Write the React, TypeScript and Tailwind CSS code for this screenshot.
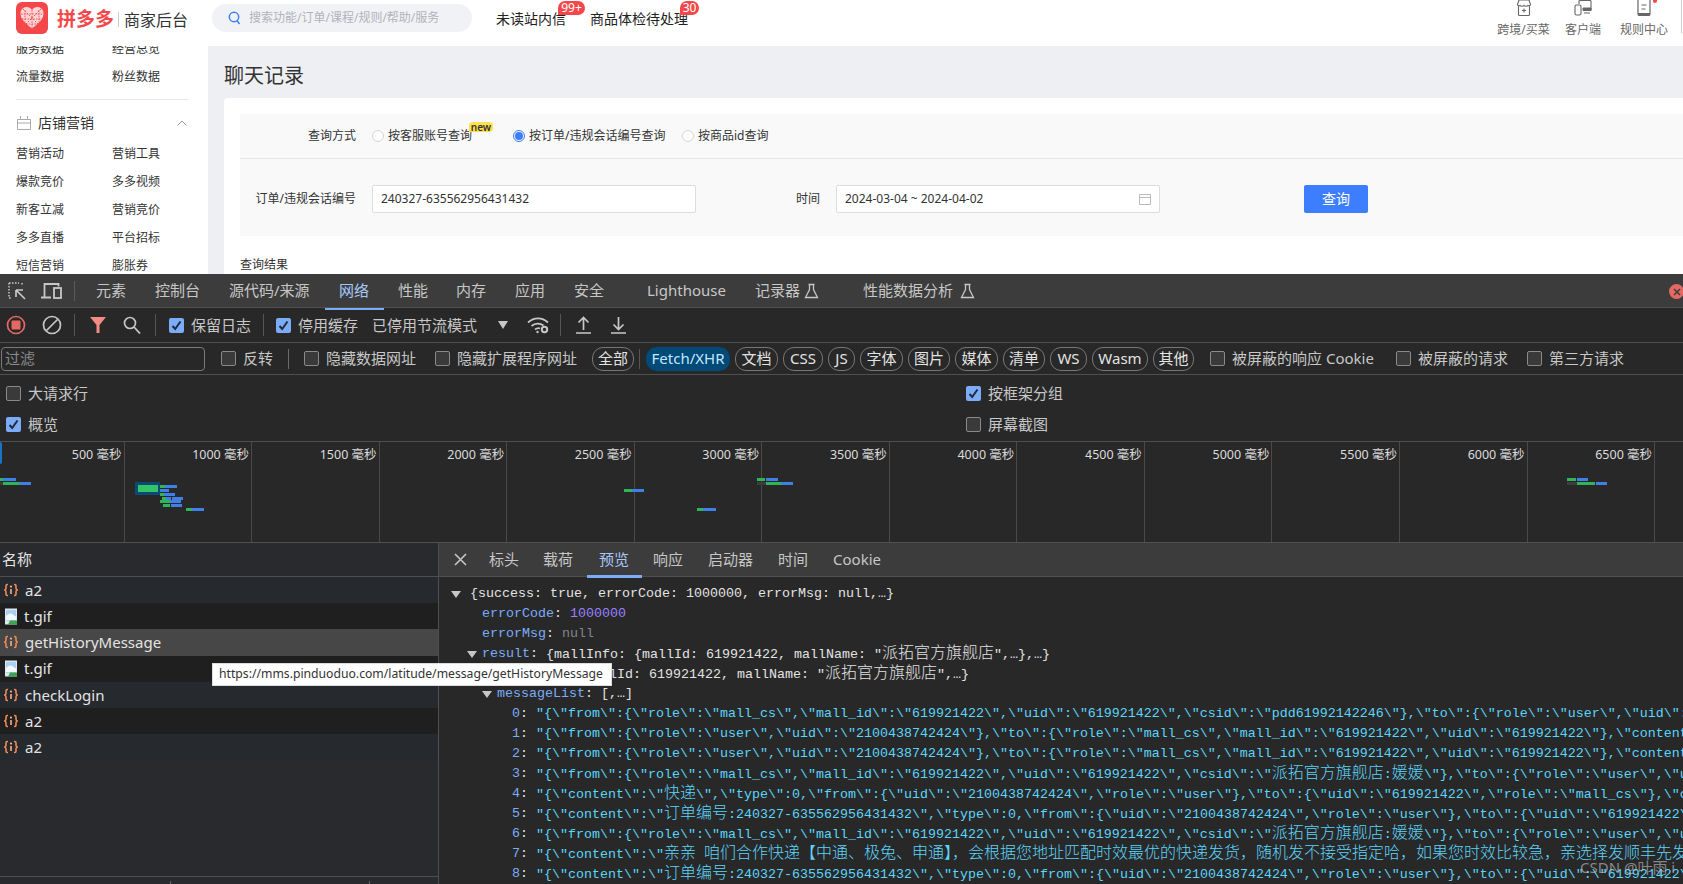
import React from "react";

const UI = '"Noto Sans","Noto Sans CJK SC",sans-serif';

function Mono({ text }: { text: string }) {
  const parts = text.split(/([\u3000-\u9fff\uff00-\uffef]+)/);
  return (
    <>
      {parts.map((p, i) =>
        /[\u3000-\u9fff\uff00-\uffef]/.test(p) ? (
          <span key={i} className="text-[16px] leading-[16px] font-['Noto_Sans_CJK_SC'] font-light">{p}</span>
        ) : (
          <span key={i}>{p}</span>
        )
      )}
    </>
  );
}

function Box({ checked }: { checked?: boolean }) {
  return checked ? (
    <span className="w-[15px] h-[15px] rounded-[2px] bg-[#7cacf8] flex items-center justify-center shrink-0">
      <svg width="11" height="11" viewBox="0 0 11 11"><path d="M1.5 6 L4.2 9 L9.5 1.5" fill="none" stroke="#1f2a3d" strokeWidth="2" /></svg>
    </span>
  ) : (
    <span className="w-[15px] h-[15px] rounded-[2px] bg-[#3a3a3a] border border-[#8a8a8a] shrink-0" />
  );
}

function Check({ label, checked, className }: { label: string; checked?: boolean; className: string }) {
  return (
    <div className={"flex items-center gap-[7px] shrink-0 whitespace-nowrap text-[15px] text-[#c7c7c7] " + className}>
      <Box checked={checked} />
      <span>{label}</span>
    </div>
  );
}

function Pill({ label, className, active }: { label: string; className: string; active?: boolean }) {
  return (
    <div
      className={
        "h-[24px] rounded-[11px] flex items-center justify-center shrink-0 text-[15px] " +
        (active ? "bg-[#004a77] text-[#c2e7ff] " : "border border-[#767676] text-[#e3e3e3] ") +
        className
      }
    >
      {label}
    </div>
  );
}

function Flask() {
  return (
    <svg width="15" height="16" viewBox="0 0 15 16" className="ml-[4px]">
      <path d="M4.5 1.5h6M5.5 1.5v5L1.5 14.5h12L9.5 6.5v-5" fill="none" stroke="#c7c7c7" strokeWidth="1.3" />
    </svg>
  );
}

function VLine({ className }: { className: string }) {
  return <span className={"w-px h-[22px] bg-[#555] shrink-0 " + className} />;
}

function JsonIcon() {
  return (
    <svg width="16" height="16" viewBox="0 0 16 16" className="shrink-0">
      <g fill="none" stroke="#ee8a55" strokeWidth="1.6">
        <path d="M5 2.5H4.2C3.2 2.5 3 3.2 3 4v2.2C3 7.2 2.5 7.8 1.2 8c1.3.2 1.8.8 1.8 1.8V12c0 .8.2 1.500 1.200 1.500H5" />
        <path d="M11 2.5h.8c1 0 1.2.7 1.2 1.500v2.200c0 1 .5 1.600 1.800 1.800-1.300.2-1.800.8-1.800 1.800V12c0 .8-.2 1.500-1.200 1.500H11" />
        <path d="M8 7v5" stroke="#f5b08a" />
      </g>
      <circle cx="8" cy="4.6" r="1.100" fill="#f5b08a" />
    </svg>
  );
}

function GifIcon() {
  return (
    <svg width="14" height="17" viewBox="0 0 14 17" className="shrink-0 ml-[1px]">
      <rect x="1" y="0.5" width="12" height="16" fill="#dfe8ee" />
      <rect x="2" y="2" width="10" height="11" fill="#a9d2f0" />
      <path d="M2 8c2-2 4-3 6-2l4 2.500V12H2z" fill="#f4f8fb" />
      <path d="M4 16.500l2-4h7v4z" fill="#3fa34d" />
    </svg>
  );
}

const sideRows1 = [["服务数据", "经营总览"], ["流量数据", "粉丝数据"]];
const sideRows2 = [["营销活动", "营销工具"], ["爆款竞价", "多多视频"], ["新客立减", "营销竞价"], ["多多直播", "平台招标"], ["短信营销", "膨胀券"]];

function SideRow({ a, b }: { a: string; b: string }) {
  return (
    <div className="h-[28px] flex items-center pl-[16px] text-[12px] text-[#333]">
      <span className="w-[96px]">{a}</span>
      <span>{b}</span>
    </div>
  );
}

function Radio({ on, className }: { on?: boolean; className: string }) {
  return on ? (
    <span className={"w-[12px] h-[12px] rounded-full border border-[#3d7eff] flex items-center justify-center shrink-0 " + className}>
      <span className="w-[8px] h-[8px] rounded-full bg-[#3d7eff]" />
    </span>
  ) : (
    <span className={"block w-[12px] h-[12px] rounded-full border border-[#d5d5d5] bg-white shrink-0 " + className} />
  );
}

const pools = ["500", "1000", "1500", "2000", "2500", "3000", "3500", "4000", "4500", "5000", "5500", "6000", "6500"];

const G = "#2fb45a";
const B = "#3f7fe8";
const D = "#3c3c3c";
const bars: [number, number, number, number, string][] = [
  [0, 478, 3, 3, G], [3, 478, 13, 3, B],
  [0, 482, 3, 3, D], [3, 482, 16, 3, G], [19, 482, 12, 3, B],
  [135, 482, 25, 13, "#0b4a73"], [138, 485, 20, 7, "#33c46a"],
  [160, 485, 5, 3, G], [165, 485, 12, 3, B],
  [160, 489, 9, 3, B],
  [160, 493, 4, 3, G], [164, 493, 11, 3, B],
  [162, 497, 4, 3, G], [166, 497, 5, 3, B], [172, 497, 11, 3, B],
  [160, 500, 10, 3, G], [170, 500, 11, 3, B],
  [163, 504, 7, 3, G], [171, 504, 11, 3, B],
  [186, 508, 6, 3, G], [192, 508, 12, 3, B],
  [624, 489, 8, 3, G], [632, 489, 12, 3, B],
  [697, 508, 6, 3, G], [703, 508, 13, 3, B],
  [757, 478, 8, 3, G], [766, 478, 12, 3, B],
  [757, 482, 9, 3, D], [766, 482, 15, 3, G], [781, 482, 12, 3, B],
  [1567, 478, 9, 3, G], [1577, 478, 11, 3, B],
  [1567, 482, 10, 3, D], [1577, 482, 18, 3, G], [1596, 482, 11, 3, B],
];

const rows: { name: string; gif?: boolean }[] = [
  { name: "a2" }, { name: "t.gif", gif: true }, { name: "getHistoryMessage" }, { name: "t.gif", gif: true },
  { name: "checkLogin" }, { name: "a2" }, { name: "a2" },
];

const msgA = String.raw`"{\"from\":{\"role\":\"mall_cs\",\"mall_id\":\"619921422\",\"uid\":\"619921422\",\"csid\":\"pdd61992142246\"},\"to\":{\"role\":\"user\",\"uid\":\"2100438742424\"}`;
const msgB = String.raw`"{\"from\":{\"role\":\"user\",\"uid\":\"2100438742424\"},\"to\":{\"role\":\"mall_cs\",\"mall_id\":\"619921422\",\"uid\":\"619921422\"},\"content\":\"`;
const msgC = String.raw`"{\"from\":{\"role\":\"mall_cs\",\"mall_id\":\"619921422\",\"uid\":\"619921422\",\"csid\":\"派拓官方旗舰店:媛媛\"},\"to\":{\"role\":\"user\",\"uid\":\"2100`;
const msgD = String.raw`"{\"content\":\"快递\",\"type\":0,\"from\":{\"uid\":\"2100438742424\",\"role\":\"user\"},\"to\":{\"uid\":\"619921422\",\"role\":\"mall_cs\"},\"content`;
const msgE = String.raw`"{\"content\":\"订单编号:240327-635562956431432\",\"type\":0,\"from\":{\"uid\":\"2100438742424\",\"role\":\"user\"},\"to\":{\"uid\":\"619921422\",\"role`;
const msgF = String.raw`"{\"content\":\"亲亲 咱们合作快递【中通、极兔、申通】，会根据您地址匹配时效最优的快递发货，随机发不接受指定哈，如果您时效比较急，亲选择发顺丰先发`;
const messages = [msgA, msgB, msgB, msgC, msgD, msgE, msgC, msgF, msgE];

function Arrow({ className }: { className: string }) {
  return (
    <svg width="10" height="7" viewBox="0 0 10 7" className={"shrink-0 " + className}>
      <path d="M0 0h10L5 7z" fill="#c7c7c7" />
    </svg>
  );
}

export default function App() {
  return (
    <div className="w-[1683px] h-[884px] overflow-hidden relative flex flex-col bg-[#282828]" style={{ fontFamily: UI }}>
      {/* page */}
      <div className="h-[274px] shrink-0 overflow-hidden flex flex-col bg-[#eeeff3]">
        <header className="h-[46px] shrink-0 bg-white flex items-start relative z-10">
          <svg width="32" height="32" viewBox="0 0 32 32" className="ml-[16px] mt-[2px] shrink-0">
            <rect width="32" height="32" rx="6" fill="#f4474a" />
            <path d="M16 26.5C9 21 4.5 17 4.5 11.5 4.5 7.5 7.5 5 10.5 5c2.3 0 4.3 1.2 5.5 3 1.2-1.8 3.2-3 5.5-3 3 0 6 2.5 6 6.5C27.5 17 23 21 16 26.5z" fill="#fbd5d6" />
            <path d="M16 8v18M9 8v12M23 8v12M5 12h22M6 17h20M10 22h12M7 7l18 18M25 7L7 25" stroke="#f4474a" strokeWidth="0.9" strokeDasharray="1.6 1.2" fill="none" />
          </svg>
          <span className="ml-[9px] mt-[5px] text-[19px] leading-[28px] font-bold tracking-[0px] text-[#f4474a] w-[56px] shrink-0 whitespace-nowrap">拼多多</span>
          <span className="ml-[5px] mt-[12px] w-px h-[15px] bg-[#ccc] shrink-0" />
          <span className="ml-[5px] mt-[8px] text-[16px] leading-[24px] text-[#333] w-[88px] shrink-0 whitespace-nowrap">商家后台</span>
          <div className="mt-[4px] ml-[0px] w-[260px] h-[28px] rounded-[14px] bg-[#f1f2f6] flex items-center pl-[16px] shrink-0">
            <svg width="13" height="14" viewBox="0 0 13 14"><circle cx="6" cy="6" r="4.7" fill="none" stroke="#3d7eff" strokeWidth="1.5" /><path d="M9 9.5L11.5 13" stroke="#3d7eff" strokeWidth="1.5" /></svg>
            <span className="ml-[8px] text-[12px] text-[#b0b3bb] whitespace-nowrap">搜索功能/订单/课程/规则/帮助/服务</span>
          </div>
          <div className="ml-[24px] mt-[9px] text-[14px] leading-[20px] text-[#222] relative w-[94px] shrink-0 whitespace-nowrap">
            未读站内信
            <span className="absolute left-[62px] -top-[8px] h-[14px] w-[27px] rounded-[7px_7px_7px_0] bg-[#f4474a] text-white text-[12px] leading-[14px] text-center">99+</span>
          </div>
          <div className="mt-[9px] text-[14px] leading-[20px] text-[#222] relative w-[100px] shrink-0 whitespace-nowrap">
            商品体检待处理
            <span className="absolute left-[90px] -top-[8px] h-[14px] w-[19px] rounded-[7px_7px_7px_0] bg-[#f4474a] text-white text-[12px] leading-[14px] text-center">30</span>
          </div>
          <div className="flex-1" />
          <div className="w-[53px] h-[38px] flex flex-col items-center text-[12px] text-[#666] shrink-0 whitespace-nowrap">
            <svg width="16" height="16" viewBox="0 0 16 16" className="shrink-0"><path d="M3 0h10l1.500 4.500c0 1.500-2 1.500-2.500 1-.5 1-3.500 1-4 0-.5 1-3.500 1-4 0-.5.5-2.500.5-2.500-1zM2.500 6v8.500c0 .5.5 1 1 1h9c.5 0 1-.5 1-1V6M6 10.500h4M8 8.500v4" fill="none" stroke="#666" strokeWidth="1.100" /></svg>
            <span className="leading-[16px] mt-[6px]">跨境/买菜</span>
          </div>
          <div className="ml-[15px] w-[36px] h-[38px] flex flex-col items-center text-[12px] text-[#666] shrink-0 whitespace-nowrap">
            <svg width="18" height="16" viewBox="0 0 18 16" className="shrink-0"><path d="M5 4V1.500C5 .8 5.500.5 6 .5h10c.6 0 1 .4 1 1v8c0 .6-.4 1-1 1H9" fill="none" stroke="#666" strokeWidth="1.100" /><rect x="1" y="5" width="6" height="10" rx="1.500" fill="none" stroke="#666" strokeWidth="1.100" /><path d="M9 8h8v2.500H9zM10 13h6" fill="#666" stroke="#666" strokeWidth="1" /></svg>
            <span className="leading-[16px] mt-[6px]">客户端</span>
          </div>
          <div className="ml-[19px] w-[48px] h-[38px] flex flex-col items-center text-[12px] text-[#666] shrink-0 whitespace-nowrap relative">
            <svg width="14" height="16" viewBox="0 0 14 16" className="shrink-0"><path d="M1 0v14c0 .8.5 1.300 1.200 1.300h9.600c.7 0 1.200-.5 1.200-1.300V0" fill="none" stroke="#666" strokeWidth="1.200" /><path d="M4.500 5h5M4.500 9h4" stroke="#666" strokeWidth="1" /><path d="M1 13h12v2.300H1z" fill="#666" /></svg>
            <span className="absolute left-[33px] top-0 w-[4px] h-[3px] rounded-b-full bg-[#f4474a]" />
            <span className="leading-[16px] mt-[6px]">规则中心</span>
          </div>
          <span className="ml-[13px] mr-[1px] w-px h-[33px] bg-[#ccc] shrink-0" />
        </header>
        <div className="flex flex-1 min-h-0">
          <aside className="w-[208px] shrink-0 bg-white overflow-hidden">
            <div className="-mt-[11px]">
              {sideRows1.map((r) => <SideRow key={r[0]} a={r[0]} b={r[1]} />)}
              <div className="mt-[8px] mx-[16px] w-[172px] h-px bg-[#e8e8e8]" />
              <div className="h-[45px] flex items-center pl-[17px] text-[14px] text-[#333]">
                <svg width="14" height="15" viewBox="0 0 14 15"><path d="M.5 4.500h13v10H.5zM.5 8h13M3.500 4.500V1M10.500 4.500V1" fill="none" stroke="#aaa" strokeWidth="1" /></svg>
                <span className="ml-[7px] w-[139px] whitespace-nowrap">店铺营销</span>
                <svg width="10" height="6" viewBox="0 0 10 6"><path d="M.5 5.500L5 1l4.500 4.500" fill="none" stroke="#999" strokeWidth="1" /></svg>
              </div>
              <div className="-mt-[5px]">
                {sideRows2.map((r) => <SideRow key={r[0]} a={r[0]} b={r[1]} />)}
              </div>
            </div>
          </aside>
          <main className="flex-1 min-w-0 pl-[16px] flex flex-col">
            <div className="h-[52px] shrink-0 flex items-center pt-[8px] text-[20px] text-[#333] whitespace-nowrap">聊天记录</div>
            <div className="flex-1 bg-white rounded-tl-[4px] pl-[16px] pt-[16px] overflow-hidden">
              <div className="bg-[#f9f9fa] text-[12px] text-[#333]">
                <div className="h-[45px] border-b border-[#e7e7e7] flex items-center whitespace-nowrap">
                  <span className="w-[116px] text-right shrink-0">查询方式</span>
                  <Radio className="ml-[16px]" />
                  <span className="ml-[4px] w-[83px] shrink-0 relative">
                    按客服账号查询
                    <span className="absolute left-[81px] -top-[5px] h-[10px] w-[24px] bg-[#ffe14d] rounded-[4px_4px_4px_0] text-[10px] leading-[10px] text-center text-[#333] font-semibold">new</span>
                  </span>
                  <Radio on className="ml-[42px]" />
                  <span className="ml-[4px] w-[136px] shrink-0">按订单/违规会话编号查询</span>
                  <Radio className="ml-[17px]" />
                  <span className="ml-[4px]">按商品id查询</span>
                </div>
                <div className="h-[77px] flex items-center whitespace-nowrap pt-[2px]">
                  <span className="w-[116px] text-right shrink-0">订单/违规会话编号</span>
                  <div className="ml-[16px] w-[324px] h-[28px] bg-white border border-[#ddd] rounded-[2px] flex items-center pl-[8px] shrink-0">240327-635562956431432</div>
                  <span className="ml-[100px] w-[24px] shrink-0">时间</span>
                  <div className="ml-[16px] w-[324px] h-[28px] bg-white border border-[#ddd] rounded-[2px] flex items-center pl-[8px] pr-[8px] justify-between shrink-0">
                    2024-03-04 ~ 2024-04-02
                    <svg width="12" height="12" viewBox="0 0 12 12"><path d="M.5 1.500h11v10H.5zM.5 4.500h11" fill="none" stroke="#bbb" strokeWidth="1" /></svg>
                  </div>
                  <button className="ml-[144px] w-[64px] h-[28px] bg-[#3d7eff] rounded-[2px] text-white text-[14px] shrink-0">查询</button>
                </div>
              </div>
              <div className="mt-[21px] text-[12px] leading-[16px] text-[#333]">查询结果</div>
            </div>
          </main>
        </div>
      </div>

      {/* devtools */}
      <div className="h-[34px] shrink-0 bg-[#3c3c3c] border-b border-[#4f4f4f] flex items-center text-[15px] text-[#c7c7c7] whitespace-nowrap relative">
        <svg width="18" height="18" viewBox="0 0 18 18" className="ml-[8px] shrink-0">
          <path d="M1 1h10M1 1v12M1 13v3h3M14 1v3" fill="none" stroke="#c7c7c7" strokeWidth="1.500" strokeDasharray="1.600 1.400" />
          <path d="M8 8h7M8 8v7M8 8l9 9" fill="none" stroke="#c7c7c7" strokeWidth="1.700" />
        </svg>
        <svg width="21" height="17" viewBox="0 0 21 17" className="ml-[15px] shrink-0">
          <path d="M3.500 15V2h14v2.500M0 15.500h10" fill="none" stroke="#c7c7c7" strokeWidth="1.800" />
          <rect x="13" y="6" width="7" height="10" fill="none" stroke="#c7c7c7" strokeWidth="1.800" />
        </svg>
        <span className="ml-[12px] w-px h-[20px] bg-[#5a5a5a] shrink-0" />
        <span className="ml-[21px] w-[59px] shrink-0">元素</span>
        <span className="w-[74px] shrink-0">控制台</span>
        <span className="w-[110px] shrink-0">源代码/来源</span>
        <span className="w-[59px] shrink-0 text-[#a8c7fa] relative">
          网络
          <span className="absolute -left-[14px] -bottom-[8px] w-[59px] h-[2px] bg-[#7cacf8]" />
        </span>
        <span className="w-[58px] shrink-0">性能</span>
        <span className="w-[59px] shrink-0">内存</span>
        <span className="w-[59px] shrink-0">应用</span>
        <span className="w-[73px] shrink-0">安全</span>
        <span className="w-[108px] shrink-0">Lighthouse</span>
        <span className="shrink-0 flex items-center w-[108px]">记录器<Flask /></span>
        <span className="shrink-0 flex items-center">性能数据分析<span className="ml-[3px] flex"><Flask /></span></span>
        <span className="absolute -right-[1px] top-[10px] w-[15px] h-[15px] rounded-full bg-[#e46962] flex items-center justify-center">
          <svg width="8" height="8" viewBox="0 0 8 8"><path d="M1 1l6 6M7 1L1 7" stroke="#3c3c3c" strokeWidth="1.500" /></svg>
        </span>
      </div>

      <div className="h-[35px] shrink-0 border-b border-[#4f4f4f] flex items-center whitespace-nowrap">
        <svg width="20" height="20" viewBox="0 0 20 20" className="ml-[6px] shrink-0">
          <circle cx="10" cy="10" r="8.500" fill="none" stroke="#e46962" strokeWidth="1.700" />
          <rect x="5.500" y="5.500" width="9" height="9" rx="1" fill="#e46962" />
        </svg>
        <svg width="20" height="20" viewBox="0 0 20 20" className="ml-[16px] shrink-0">
          <circle cx="10" cy="10" r="8.500" fill="none" stroke="#c7c7c7" strokeWidth="1.700" />
          <path d="M15.500 4.500L4.500 15.500" stroke="#c7c7c7" strokeWidth="1.700" />
        </svg>
        <span className="ml-[12px]"><VLine className="block" /></span>
        <svg width="16" height="18" viewBox="0 0 16 18" className="ml-[15px] shrink-0"><path d="M0 1h16L9.500 9v8h-3V9z" fill="#f28b82" /></svg>
        <svg width="18" height="18" viewBox="0 0 18 18" className="ml-[17px] shrink-0">
          <circle cx="7" cy="7" r="5.500" fill="none" stroke="#c7c7c7" strokeWidth="1.700" />
          <path d="M11 11l6 6.500" stroke="#c7c7c7" strokeWidth="1.800" />
        </svg>
        <span className="ml-[14px]"><VLine className="block" /></span>
        <Check checked label="保留日志" className="ml-[13px] w-[88px]" />
        <VLine className="ml-[6px]" />
        <Check checked label="停用缓存" className="ml-[12px] w-[96px]" />
        <span className="text-[15px] text-[#c7c7c7] w-[126px] shrink-0">已停用节流模式</span>
        <svg width="10" height="8" viewBox="0 0 10 8" className="shrink-0"><path d="M0 0h10L5 8z" fill="#c7c7c7" /></svg>
        <svg width="23" height="18" viewBox="0 0 23 18" className="ml-[19px] shrink-0">
          <path d="M1 6.500C7 1 15 1 21 6.500M4.500 10C8 7 13 7 16.500 9.500M8 13.500c2-1.500 4-1.500 5-1" fill="none" stroke="#c7c7c7" strokeWidth="1.700" />
          <circle cx="17.500" cy="13.500" r="2.700" fill="none" stroke="#c7c7c7" strokeWidth="2" />
          <circle cx="10.500" cy="16" r="1.200" fill="#c7c7c7" />
        </svg>
        <span className="ml-[10px]"><VLine className="block" /></span>
        <svg width="17" height="18" viewBox="0 0 17 18" className="ml-[14px] shrink-0"><path d="M8.500 14V1.500M3.500 6.500l5-5 5 5M1 17h15" fill="none" stroke="#c7c7c7" strokeWidth="1.700" /></svg>
        <svg width="17" height="18" viewBox="0 0 17 18" className="ml-[18px] shrink-0"><path d="M8.500 1v12.500M3.500 8.500l5 5 5-5M1 17h15" fill="none" stroke="#c7c7c7" strokeWidth="1.700" /></svg>
      </div>

      <div className="h-[32px] shrink-0 border-b border-[#4f4f4f] flex items-center whitespace-nowrap">
        <div className="ml-[1px] w-[204px] h-[24px] border border-[#7a7a7a] rounded-[4px] flex items-center pl-[3px] text-[15px] text-[#8a8a8a] shrink-0">过滤</div>
        <Check label="反转" className="ml-[16px] w-[52px]" />
        <span className="ml-[15px] w-px h-[20px] bg-[#6a6a6a] shrink-0" />
        <Check label="隐藏数据网址" className="ml-[15px] w-[112px]" />
        <Check label="隐藏扩展程序网址" className="ml-[19px] w-[142px]" />
        <Pill label="全部" className="ml-[15px] w-[42px]" />
        <span className="ml-[5px] w-px h-[20px] bg-[#555] shrink-0" />
        <Pill label="Fetch/XHR" active className="ml-[6px] w-[84px]" />
        <Pill label="文档" className="ml-[5px] w-[43px]" />
        <Pill label="CSS" className="ml-[5px] w-[40px]" />
        <Pill label="JS" className="ml-[5px] w-[27px]" />
        <Pill label="字体" className="ml-[5px] w-[43px]" />
        <Pill label="图片" className="ml-[5px] w-[42px]" />
        <Pill label="媒体" className="ml-[5px] w-[43px]" />
        <Pill label="清单" className="ml-[5px] w-[42px]" />
        <Pill label="WS" className="ml-[5px] w-[37px]" />
        <Pill label="Wasm" className="ml-[5px] w-[56px]" />
        <Pill label="其他" className="ml-[5px] w-[41px]" />
        <Check label="被屏蔽的响应 Cookie" className="ml-[16px] w-[167px]" />
        <Check label="被屏蔽的请求" className="ml-[19px] w-[112px]" />
        <Check label="第三方请求" className="ml-[19px]" />
      </div>

      <div className="h-[67px] shrink-0 border-b border-[#4f4f4f] grid grid-cols-[960px_1fr] grid-rows-[31px_31px] pt-[3px] pl-[6px] items-center">
        <Check label="大请求行" className="w-[100px]" />
        <Check checked label="按框架分组" className="w-[100px]" />
        <Check checked label="概览" className="w-[100px]" />
        <Check label="屏幕截图" className="w-[100px]" />
      </div>

      <div className="h-[101px] shrink-0 border-b border-[#4f4f4f] flex relative overflow-hidden">
        <span className="absolute left-0 top-0 w-[2px] h-[22px] bg-[#1a73c7] rounded-r-[2px]" />
        {pools.map((p, i) => (
          <div
            key={p}
            className={(i === 0 ? "w-[124.5px] " : "w-[127.55px] ") + "shrink-0 border-r border-[#4a4a4a] text-right pr-[2px] pt-[4px] text-[12.5px] leading-[18px] text-[#dcdcdc] whitespace-nowrap"}
          >
            {p} 毫秒
          </div>
        ))}
        <svg width="1683" height="101" viewBox="0 442 1683 101" className="absolute left-0 top-0">
          {bars.map((b, i) => <rect key={i} x={b[0]} y={b[1]} width={b[2]} height={b[3]} fill={b[4]} />)}
        </svg>
      </div>

      <div className="flex-1 min-h-0 flex">
        <div className="w-[439px] shrink-0 border-r border-[#4f4f4f] bg-[#292a2d] flex flex-col">
          <div className="h-[34px] shrink-0 border-b border-[#4f4f4f] flex items-center pl-[2px] text-[15px] text-[#e3e3e3]">名称</div>
          {rows.map((r, i) => (
            <div
              key={i}
              className={
                "h-[26.2px] shrink-0 flex items-center pl-[3px] gap-[6px] text-[15px] text-[#e3e3e3] " +
                (i === 2 ? "bg-[#474747]" : i % 2 === 0 ? "bg-[#26292d]" : "bg-[#1f1f1f]")
              }
            >
              {r.gif ? <GifIcon /> : <JsonIcon />}
              <span>{r.name}</span>
            </div>
          ))}
          <div className="flex-1" />
          <div className="h-[8px] shrink-0 border-t border-[#4f4f4f] flex items-end">
            <span className="ml-[170px] w-px h-[3px] bg-[#666]" />
            <span className="ml-[198px] w-px h-[3px] bg-[#666]" />
          </div>
        </div>
        <div className="flex-1 min-w-0 flex flex-col bg-[#282828] overflow-hidden">
          <div className="h-[34px] shrink-0 bg-[#3c3c3c] border-b border-[#4f4f4f] flex items-center text-[15px] text-[#c7c7c7] whitespace-nowrap">
            <svg width="13" height="13" viewBox="0 0 13 13" className="ml-[15px] shrink-0"><path d="M1 1l11 11M12 1L1 12" stroke="#c7c7c7" strokeWidth="1.600" /></svg>
            <span className="ml-[22px] w-[54px] shrink-0">标头</span>
            <span className="w-[56px] shrink-0">载荷</span>
            <span className="w-[54px] shrink-0 text-[#a8c7fa] relative">
              预览
              <span className="absolute -left-[12px] -bottom-[7px] w-[55px] h-[3px] bg-[#7cacf8]" />
            </span>
            <span className="w-[55px] shrink-0">响应</span>
            <span className="w-[70px] shrink-0">启动器</span>
            <span className="w-[55px] shrink-0">时间</span>
            <span>Cookie</span>
          </div>
          <div className="flex-1 pt-[7px] font-['Liberation_Mono'] text-[13.33px] whitespace-nowrap overflow-hidden text-[#e3e3e3]">
            <div className="h-[20px] flex items-center pl-[12px]">
              <Arrow className="mr-[9px]" />
              <span><Mono text="{success: true, errorCode: 1000000, errorMsg: null,…}" /></span>
            </div>
            <div className="h-[20px] flex items-center pl-[43px]">
              <span className="text-[#7cacf8]">errorCode</span><span>:&nbsp;</span><span className="text-[#9980ff]">1000000</span>
            </div>
            <div className="h-[20px] flex items-center pl-[43px]">
              <span className="text-[#7cacf8]">errorMsg</span><span>:&nbsp;</span><span className="text-[#80868b]">null</span>
            </div>
            <div className="h-[20px] flex items-center pl-[28px]">
              <Arrow className="mr-[5px]" />
              <span className="text-[#7cacf8]">result</span><span>:&nbsp;</span>
              <span><Mono text={'{mallInfo: {mallId: 619921422, mallName: "派拓官方旗舰店",…},…}'} /></span>
            </div>
            <div className="h-[20px] flex items-center pl-[43px]">
              <Arrow className="mr-[5px]" />
              <span className="text-[#7cacf8]">mallInfo</span><span>:&nbsp;</span>
              <span><Mono text={'{mallId: 619921422, mallName: "派拓官方旗舰店",…}'} /></span>
            </div>
            <div className="h-[20px] flex items-center pl-[43px]">
              <Arrow className="mr-[5px]" />
              <span className="text-[#7cacf8]">messageList</span><span>:&nbsp;[,…]</span>
            </div>
            {messages.map((m, i) => (
              <div key={i} className="h-[20px] flex items-center pl-[73px]">
                <span className="text-[#7cacf8]">{i}</span><span>:&nbsp;</span>
                <span className="text-[#5cd5fb]"><Mono text={m} /></span>
              </div>
            ))}
          </div>
        </div>
      </div>

      {/* tooltip */}
      <div className="absolute left-[212px] top-[663px] w-[400px] h-[23px] bg-white border border-[#ddd] flex items-center pl-[6px] text-[12.2px] text-[#333] whitespace-nowrap">
        https://mms.pinduoduo.com/latitude/message/getHistoryMessage
      </div>
      <div className="absolute left-[1580px] top-[856px] text-[15px] text-[#c8c8c8]/60 whitespace-nowrap">CSDN @叶雨 i</div>
    </div>
  );
}
